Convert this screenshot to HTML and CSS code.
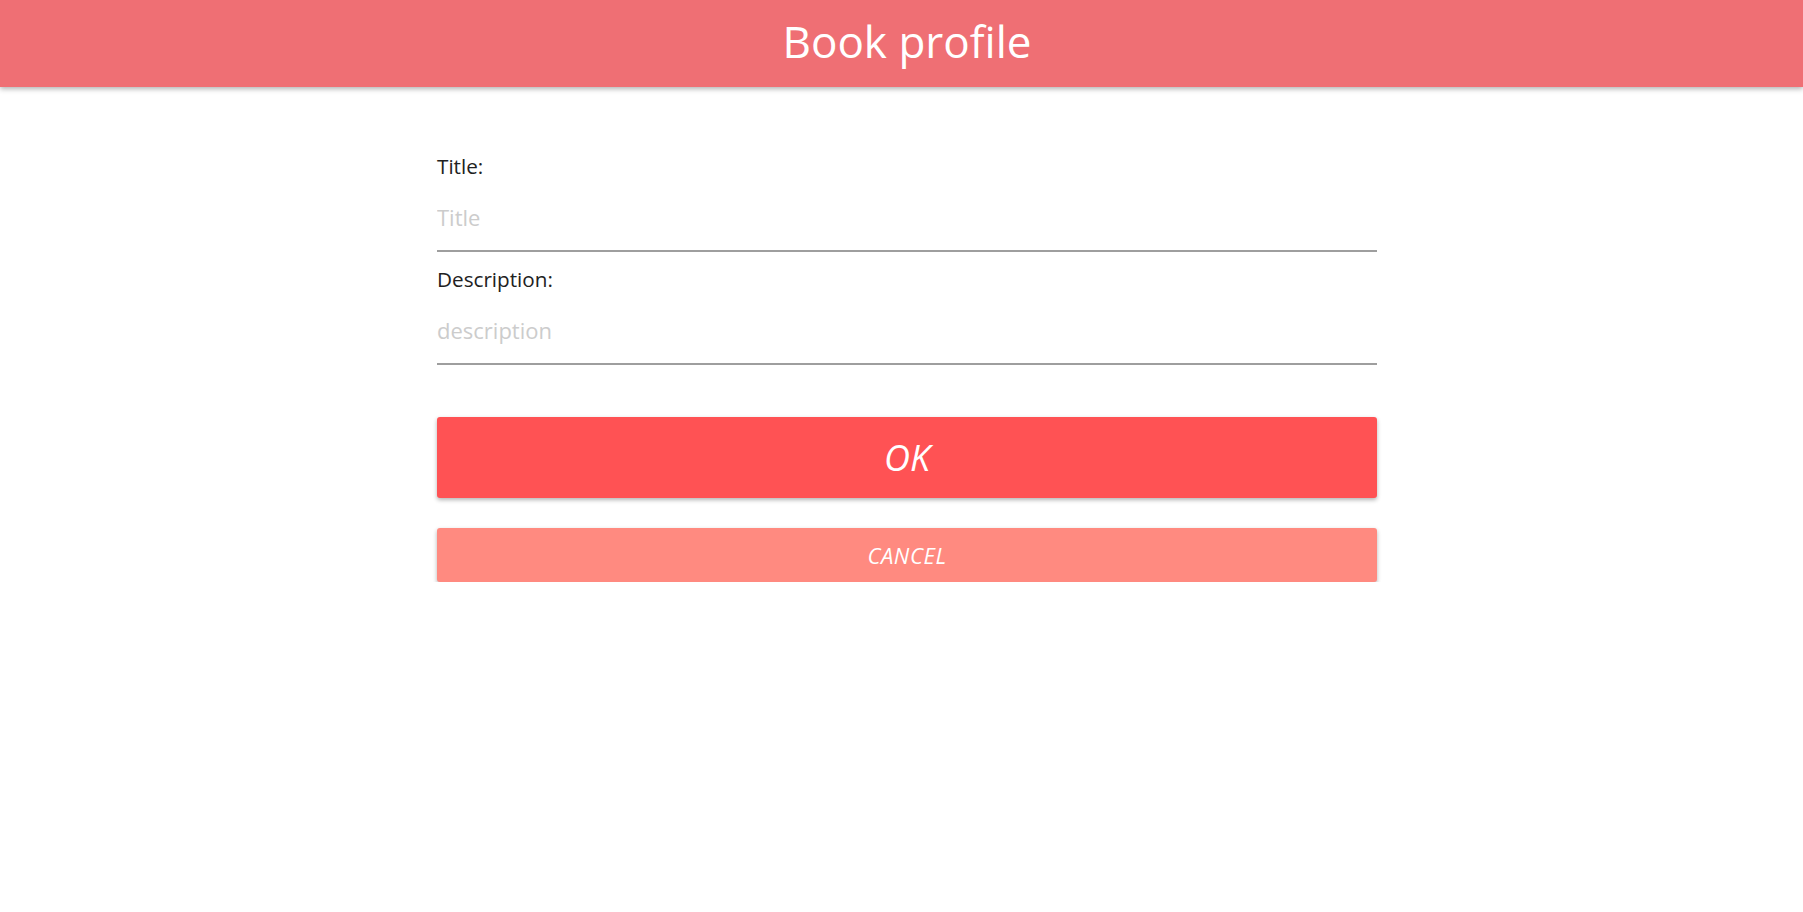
FILE: index.html
```html
<!DOCTYPE html>
<html lang="en">
<head>
<meta charset="utf-8">
<title>Book profile</title>
<link rel="stylesheet" href="styles.css">
</head>
<body>
<header class="app-bar">
  <h1 class="app-title">Book profile</h1>
</header>
<main class="page">
  <form class="book-form">
    <div class="field">
      <label class="field-label" for="title">Title:</label>
      <input class="field-input" id="title" type="text" placeholder="Title">
    </div>
    <div class="field">
      <label class="field-label" for="description">Description:</label>
      <input class="field-input" id="description" type="text" placeholder="description">
    </div>
    <div class="actions">
      <button class="btn btn-ok" type="button">OK</button>
      <button class="btn btn-cancel" type="button">CANCEL</button>
    </div>
  </form>
</main>
</body>
</html>
```

FILE: styles.css
```css
html, body {
  margin: 0;
  padding: 0;
  background: #ffffff;
}

body {
  font-family: "Open Sans", "Noto Sans", "Liberation Sans", sans-serif;
  color: #212121;
}

.app-bar {
  height: 87px;
  box-sizing: border-box;
  padding-top: 2px;
  background: #ef6f74;
  box-shadow: 0 2px 5px rgba(0, 0, 0, 0.3);
  text-align: center;
}

.app-title {
  margin: 0;
  padding-left: 11px;
  font-size: 44px;
  font-weight: 400;
  line-height: 78px;
  color: #ffffff;
}

.page {
  width: 940px;
  padding-left: 11px;
  margin: 0 auto;
  padding-top: 67px;
}

.book-form {
  display: flex;
  flex-direction: column;
}

.field {
  display: flex;
  flex-direction: column;
}

.field + .field {
  margin-top: 15px;
}

.field-label {
  font-size: 20.7px;
  line-height: 24px;
  color: #212121;
}

.field-input {
  display: block;
  width: 100%;
  box-sizing: content-box;
  height: 26px;
  line-height: 26px;
  padding: 26px 0 20px;
  margin: 0;
  border: none;
  border-bottom: 2px solid #9e9e9e;
  outline: none;
  background: transparent;
  font-family: inherit;
  font-size: 22px;
  color: #212121;
}

.field-input::placeholder {
  color: #cccccc;
  opacity: 1;
}

.actions {
  display: flex;
  flex-direction: column;
  gap: 30px;
  margin-top: 52px;
}

.btn {
  display: block;
  width: 100%;
  border: none;
  border-radius: 3px;
  color: #ffffff;
  font-family: inherit;
  font-style: italic;
  font-weight: 400;
  cursor: pointer;
  box-shadow: 0 2px 4px rgba(0, 0, 0, 0.3);
  padding: 0;
}

.btn-ok {
  height: 81px;
  background: #ff5254;
  font-size: 36px;
}

.btn-cancel {
  height: 54px;
  background: #ff8a80;
  font-size: 22px;
  letter-spacing: 0.6px;
}
```
